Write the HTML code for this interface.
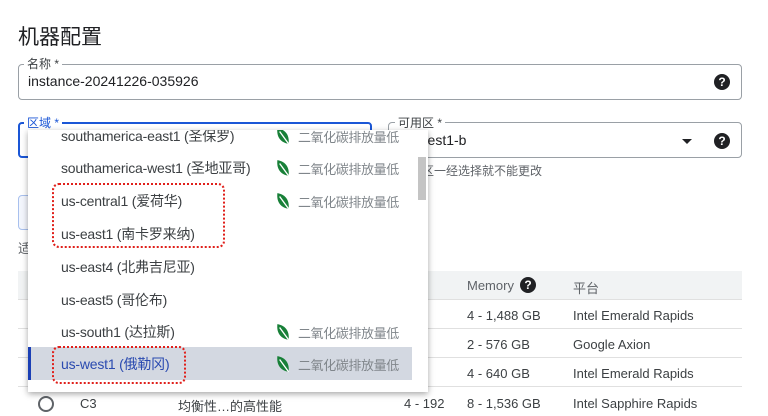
<!DOCTYPE html>
<html><head><meta charset="utf-8"><style>
*{box-sizing:border-box;margin:0;padding:0}
body{width:768px;height:401px;overflow:hidden;background:#fff;font-family:"Liberation Sans","Noto Sans CJK SC",sans-serif;color:#202124;position:relative}
.abs{position:absolute}
.field{position:absolute;border:1px solid #9aa0a6;border-radius:4px}
.lbl{position:absolute;background:#fff;font-size:12px;padding:0 3px;line-height:14px}
.help{position:absolute;width:16px;height:16px;border-radius:50%;background:#202124;color:#fff;font-size:12px;font-weight:bold;text-align:center;line-height:16px}
.row{position:absolute;left:18px;width:724px;height:29px;border-bottom:1px solid #e0e0e0;font-size:13px;color:#3c4043}
.row span{position:absolute;top:8px}
.dd{position:absolute;left:28px;top:130px;width:400px;height:262px;background:#fff;box-shadow:0 2px 6px rgba(0,0,0,.35);overflow:hidden}
.it{position:absolute;left:0;width:384px;height:33px;font-size:14px;color:#3c4043}
.it .t{position:absolute;left:33px;top:7px;letter-spacing:-0.2px}
.it .g{position:absolute;left:270px;top:8px;color:#80868b;font-size:13px;letter-spacing:-0.4px}
.it svg{position:absolute;left:247px;top:8px}
.red{position:absolute;border:2.5px dotted #e0201b;border-radius:7px}
</style></head><body>
<div class="abs" style="left:18px;top:21px;font-size:21px">机器配置</div>

<div class="field" style="left:18px;top:64px;width:724px;height:36px"></div>
<div class="lbl" style="left:24px;top:57px;color:#3c4043">名称 *</div>
<div class="abs" style="left:28px;top:73px;font-size:14px">instance-20241226-035926</div>
<div class="help" style="left:714px;top:74px">?</div>

<div class="field" style="left:18px;top:122px;width:354px;height:36px;border:2px solid #1a56d6"></div>
<div class="lbl" style="left:24px;top:116px;color:#1a56d6">区域 *</div>

<div class="field" style="left:388px;top:122px;width:354px;height:36px"></div>
<div class="lbl" style="left:395px;top:116px;color:#3c4043">可用区 *</div>
<div class="abs" style="left:398px;top:132px;font-size:14px">us-west1-b</div>
<div class="abs" style="left:682px;top:139px;width:0;height:0;border-left:5px solid transparent;border-right:5px solid transparent;border-top:5px solid #202124"></div>
<div class="help" style="left:714px;top:133px">?</div>
<div class="abs" style="left:398px;top:162px;font-size:12px;color:#5f6368">可用区一经选择就不能更改</div>

<div class="abs" style="left:18px;top:195px;width:60px;height:35px;border:1px solid #a8c0ee;border-radius:4px;background:#f3f6fd"></div>
<div class="abs" style="left:18px;top:238px;font-size:13px;color:#5f6368">适</div>

<div class="abs" style="left:18px;top:271px;width:724px;height:29px;background:#f1f3f4;border-bottom:1px solid #e0e0e0;font-size:13px;color:#5f6368">
<span class="abs" style="left:449px;top:7px">Memory</span><div class="help" style="left:502px;top:6px">?</div><span class="abs" style="left:555px;top:7px">平台</span></div>
<div class="row" style="top:300px"><span style="left:449px">4 - 1,488 GB</span><span style="left:555px">Intel Emerald Rapids</span></div>
<div class="row" style="top:329px"><span style="left:449px">2 - 576 GB</span><span style="left:555px">Google Axion</span></div>
<div class="row" style="top:358px"><span style="left:449px">4 - 640 GB</span><span style="left:555px">Intel Emerald Rapids</span></div>
<div class="row" style="top:387px;border:none"><span style="left:449px;top:9px">8 - 1,536 GB</span><span style="left:555px;top:9px">Intel Sapphire Rapids</span><span style="left:386px;top:9px">4 - 192</span><span style="left:62px;top:9px">C3</span><span style="left:160px;top:9px">均衡性…的高性能</span></div>
<div class="abs" style="left:38px;top:396px;width:16px;height:16px;border:2px solid #5f6368;border-radius:50%"></div>

<div class="dd">
<div class="it" style="top:-11px"><span class="t">southamerica-east1 (圣保罗)</span><svg width="16" height="18" viewBox="0 0 14 16"><path d="M2 1 C8 2 13 6 12 15 C6 14 1 10 2 1Z" fill="#188038"/><path d="M4 4 L12 15" stroke="#fff" stroke-width="1.2"/></svg><span class="g">二氧化碳排放量低</span></div>
<div class="it" style="top:21px"><span class="t">southamerica-west1 (圣地亚哥)</span><svg width="16" height="18" viewBox="0 0 14 16"><path d="M2 1 C8 2 13 6 12 15 C6 14 1 10 2 1Z" fill="#188038"/><path d="M4 4 L12 15" stroke="#fff" stroke-width="1.2"/></svg><span class="g">二氧化碳排放量低</span></div>
<div class="it" style="top:54px"><span class="t">us-central1 (爱荷华)</span><svg width="16" height="18" viewBox="0 0 14 16"><path d="M2 1 C8 2 13 6 12 15 C6 14 1 10 2 1Z" fill="#188038"/><path d="M4 4 L12 15" stroke="#fff" stroke-width="1.2"/></svg><span class="g">二氧化碳排放量低</span></div>
<div class="it" style="top:87px"><span class="t">us-east1 (南卡罗来纳)</span></div>
<div class="it" style="top:120px"><span class="t">us-east4 (北弗吉尼亚)</span></div>
<div class="it" style="top:153px"><span class="t">us-east5 (哥伦布)</span></div>
<div class="it" style="top:185px"><span class="t">us-south1 (达拉斯)</span><svg width="16" height="18" viewBox="0 0 14 16"><path d="M2 1 C8 2 13 6 12 15 C6 14 1 10 2 1Z" fill="#188038"/><path d="M4 4 L12 15" stroke="#fff" stroke-width="1.2"/></svg><span class="g">二氧化碳排放量低</span></div>
<div class="it" style="top:217px;background:#d3d8e1;border-left:3px solid #1a3fb5"><span class="t" style="left:30px;color:#2a4ab0">us-west1 (俄勒冈)</span><svg style="left:244px" width="16" height="18" viewBox="0 0 14 16"><path d="M2 1 C8 2 13 6 12 15 C6 14 1 10 2 1Z" fill="#188038"/><path d="M4 4 L12 15" stroke="#fff" stroke-width="1.2"/></svg><span class="g" style="left:267px">二氧化碳排放量低</span></div>
<div class="abs" style="left:390px;top:27px;width:8px;height:43px;background:#c4c4c4"></div>
</div>

<div class="red" style="left:52px;top:183px;width:173px;height:65px"></div>
<div class="red" style="left:52px;top:346px;width:134px;height:38px"></div>
</body></html>
